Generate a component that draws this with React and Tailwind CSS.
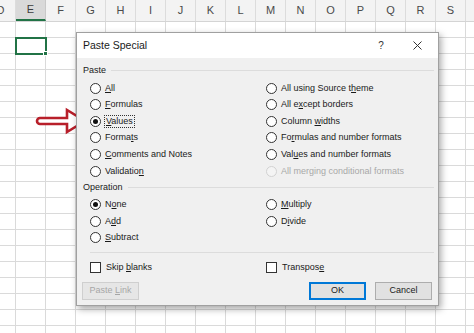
import React from "react";

const COLS = ["D", "E", "F", "G", "H", "I", "J", "K", "L", "M", "N", "O", "P", "Q", "R", "S", ""];

const PASTE = [
  ["All", 0, "All using Source theme", 18],
  ["Formulas", 0, "All except borders", 5],
  ["Values", 0, "Column widths", 7],
  ["Formats", 5, "Formulas and number formats", 2],
  ["Comments and Notes", 0, "Values and number formats", 3],
  ["Validation", 9, "All merging conditional formats", -1],
];

const OPS = [
  ["None", 1, "Multiply", 0],
  ["Add", 1, "Divide", 1],
  ["Subtract", 0, null, -1],
];

// access key underline
function Acc({ text, k }) {
  if (k < 0) return <span>{text}</span>;
  return (
    <span>
      {text.slice(0, k)}
      <u className="underline underline-offset-[1px]">{text[k]}</u>
      {text.slice(k + 1)}
    </span>
  );
}

function Radio({ label, k, checked, disabled, focus }) {
  if (!label) return <div className="h-[16.65px]" />;
  return (
    <div className="h-[16.65px] flex items-center">
      <span
        className={`w-[11px] h-[11px] rounded-full border flex items-center justify-center mr-[4px] shrink-0 ${
          disabled ? "border-[#d2d2d2] bg-[#f4f4f4]" : "border-[#333] bg-white"
        }`}
      >
        {checked && <span className="w-[5px] h-[5px] rounded-full bg-[#111]" />}
      </span>
      <span
        className={`${disabled ? "text-[#a8a8a8]" : "text-[#1a1a1a]"} ${
          focus ? "border border-dotted border-[#333] px-[1px] -ml-[1px] leading-[11px]" : ""
        }`}
      >
        <Acc text={label} k={k} />
      </span>
    </div>
  );
}

function Check({ label, k }) {
  return (
    <div className="h-[16.65px] flex items-center">
      <span className="w-[11px] h-[11px] border border-[#333] bg-white mr-[5px] shrink-0" />
      <span className="text-[#1a1a1a]">
        <Acc text={label} k={k} />
      </span>
    </div>
  );
}

function GroupLabel({ children }) {
  return (
    <div className="h-[16px] flex items-center">
      <span className="text-[#1a1a1a] mr-[5px]">{children}</span>
      <span className="flex-1 h-px bg-[#dcdcdc] mr-[-2px]" />
    </div>
  );
}

function Sheet() {
  return (
    <div className="w-[474px] h-[333px] overflow-hidden bg-white">
      {/* column headers */}
      <div className="flex h-[22px] bg-[#f3f3f3] border-b border-[#d4d4d4]">
        {COLS.map((c, i) => (
          <div
            key={i}
            className={`w-[30px] shrink-0 flex items-center justify-center text-[11px] border-r ${
              i === 0 ? "-ml-[14px]" : ""
            } ${
              c === "E"
                ? "bg-[#d9d9d9] text-[#3c3c3c] border-b-2 border-b-[#217346] border-r-[#c8c8c8]"
                : "text-[#4a4a4a] border-r-[#dcdcdc]"
            }`}
          >
            {c}
          </div>
        ))}
      </div>
      {Array.from({ length: 20 }).map((_, r) => (
        <div key={r} className="flex h-[16px]">
          {COLS.map((c, i) => (
            <div
              key={i}
              className={`w-[30px] shrink-0 border-r border-b border-[#dadada] ${i === 0 ? "-ml-[14px]" : ""}`}
            />
          ))}
        </div>
      ))}
    </div>
  );
}

export default function App() {
  return (
    <div
      className="relative w-[474px] h-[333px] overflow-hidden text-[9px] leading-none"
      style={{ fontFamily: '"Liberation Sans", Arial, sans-serif' }}
    >
      <Sheet />

      {/* selected cell E2 */}
      <div className="absolute left-[15px] top-[37px] w-[32px] h-[18px] border-2 border-[#217346]">
        <span className="absolute -right-[3px] -bottom-[3px] w-[5px] h-[5px] bg-[#217346] border border-white" />
      </div>

      {/* red arrow */}
      <svg className="absolute left-[30px] top-[107px]" width="60" height="29" viewBox="0 0 60 29">
        <path
          d="M10 11 L37 11 L37 3 L55 14 L37 25 L37 17 L10 17 A3 3 0 0 1 10 11 Z"
          fill="white"
          stroke="#b81f2a"
          strokeWidth="2.6"
          strokeLinejoin="miter"
        />
      </svg>

      {/* Paste Special dialog */}
      <div className="absolute left-[76px] top-[32px] w-[363px] h-[274px] flex flex-col bg-[#f0f0f0] border border-[#a0a0a0] shadow-[2px_3px_7px_rgba(0,0,0,0.35)]">
        <div className="h-[25px] bg-white flex items-center pl-[6px] text-[10.5px] text-[#1a1a1a]">
          <span className="flex-1">Paste Special</span>
          <span className="w-[12px] text-center mr-[26px] text-[10px] text-[#333]">?</span>
          <svg className="mr-[16px]" width="9" height="9" viewBox="0 0 9 9">
            <path d="M0.5 0.5 L8.5 8.5 M8.5 0.5 L0.5 8.5" stroke="#333" strokeWidth="1" />
          </svg>
        </div>

        <div className="flex-1 flex flex-col px-[6px] pt-[4px]">
          <GroupLabel>Paste</GroupLabel>
          <div className="grid grid-cols-[176px_1fr] pl-[7px] mt-[1.7px]">
            {PASTE.map(([l, lk, r, rk], i) => (
              <React.Fragment key={l}>
                <Radio label={l} k={lk} checked={i === 2} focus={i === 2} />
                <Radio label={r} k={rk} disabled={i === 5} />
              </React.Fragment>
            ))}
          </div>

          <GroupLabel>Operation</GroupLabel>
          <div className="grid grid-cols-[176px_1fr] pl-[7px] mt-[0.7px]">
            {OPS.map(([l, lk, r, rk], i) => (
              <React.Fragment key={l}>
                <Radio label={l} k={lk} checked={i === 0} />
                <Radio label={r} k={rk} />
              </React.Fragment>
            ))}
          </div>

          <div className="h-px bg-[#dcdcdc] ml-[7px] -mr-[2px] mt-[6px]" />

          <div className="grid grid-cols-[176px_1fr] pl-[7px] mt-[6px]">
            <Check label="Skip blanks" k={5} />
            <Check label="Transpose" k={8} />
          </div>

          <div className="flex items-center mt-[6px] -ml-[1px]">
            <button className="w-[57px] h-[18px] bg-[#e6e6e6] border border-[#cfcfcf] text-[#a6a6a6] text-[9px]">
              <Acc text="Paste Link" k={6} />
            </button>
            <div className="flex-1" />
            <button className="w-[57px] h-[18px] bg-[#e1e1e1] border-2 border-[#0078d7] text-[#1a1a1a] text-[9px]">
              OK
            </button>
            <button className="w-[57px] h-[18px] ml-[9px] bg-[#e1e1e1] border border-[#adadad] text-[#1a1a1a] text-[9px]">
              Cancel
            </button>
          </div>
        </div>
      </div>
    </div>
  );
}
